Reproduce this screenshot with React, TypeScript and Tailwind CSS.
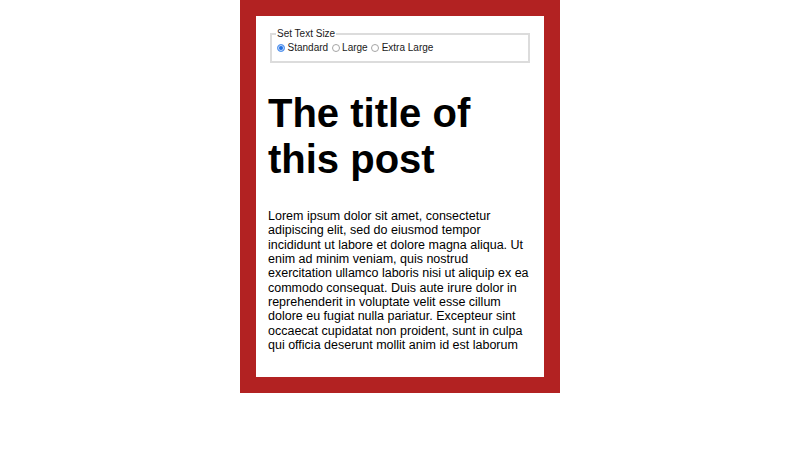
import { useState } from "react";

const sizes = ["Standard", "Large", "Extra Large"];

const lorem =
  "Lorem ipsum dolor sit amet, consectetur adipiscing elit, sed do eiusmod tempor incididunt ut labore et dolore magna aliqua. Ut enim ad minim veniam, quis nostrud exercitation ullamco laboris nisi ut aliquip ex ea commodo consequat. Duis aute irure dolor in reprehenderit in voluptate velit esse cillum dolore eu fugiat nulla pariatur. Excepteur sint occaecat cupidatat non proident, sunt in culpa qui officia deserunt mollit anim id est laborum";

export default function App() {
  const [size, setSize] = useState("Standard");

  return (
    <div className="flex justify-center h-[450px] bg-white font-['Liberation_Sans',Arial,sans-serif] text-black">
      <article className="w-[320px] self-start border-[16px] border-[#b22222] bg-white p-[12px]">
        <fieldset className="mx-[2px] border-2 border-[#dcdcdc] pl-[4px] pr-[4px] pt-[2px] pb-[8px]">
          <legend className="px-[1px] text-[10px] leading-[11.5px] text-[#1a1a1a]">Set Text Size</legend>
          <div className="flex items-center gap-[3.5px] text-[10px] leading-[11.5px] text-[#1a1a1a]">
            {sizes.map((s) => (
              <label key={s} className="flex items-center gap-[2.5px] first:ml-[1px]">
                <input
                  type="radio"
                  name="size"
                  checked={size === s}
                  onChange={() => setSize(s)}
                  className="appearance-none m-0 w-[8px] h-[8px] mt-[1px] rounded-full border border-[#a5a5a5] bg-white checked:border-[#5d9af0] checked:bg-[#1f6fe2] checked:shadow-[inset_0_0_0_1px_#c9dcfa]"
                />
                <span>{s}</span>
              </label>
            ))}
          </div>
        </fieldset>

        <h1 className="mt-[27px] text-[40px] leading-[46px] font-bold">The title of this post</h1>

        <p className="mt-[27px] mb-[12.5px] text-[12.5px] leading-[14.35px]">{lorem}</p>
      </article>
    </div>
  );
}
